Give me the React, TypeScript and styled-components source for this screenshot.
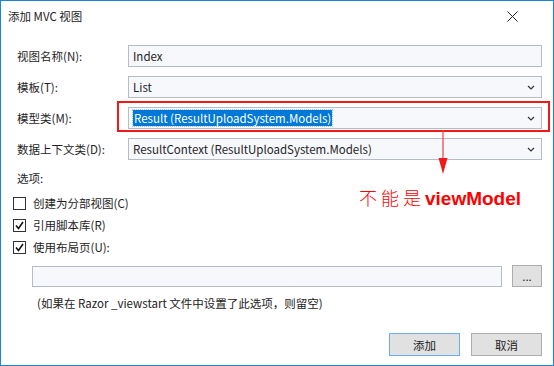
import React from "react";
import styled, { createGlobalStyle } from "styled-components";

const Global = createGlobalStyle`
  html, body { margin: 0; padding: 0; background: #fff; }
  * { box-sizing: border-box; }
  body { font-family: "Noto Sans CJK SC", "Noto Sans", sans-serif; font-size: 11.5px; line-height: 16px; color: #1e1e1e; }
`;

const Window = styled.div`
  position: relative;
  width: 554px;
  height: 366px;
  border: 1px solid #1c84d8;
  background: #fff;
  display: flex;
  flex-direction: column;
`;

const TitleBar = styled.div`
  height: 30px;
  display: flex;
  align-items: center;
  justify-content: space-between;
  padding: 0 35px 0 7px;
  color: #222;
`;

const CloseBtn = styled.div`
  width: 11px;
  height: 11px;
  display: flex;
`;

const Form = styled.div`
  position: relative;
  padding: 14px 11px 0 16px;
  display: grid;
  grid-template-columns: 111px 1fr;
  row-gap: 9px;
  align-items: center;
`;

const Label = styled.div`
  line-height: 22px;
`;

const Field = styled.div`
  position: relative;
  height: 22px;
  border: 1px solid #b6bcc6;
  background: #f6f8fc;
  display: flex;
  align-items: center;
  padding: 0 6px 0 4px;
`;

const FieldText = styled.span`
  flex: 1;
  white-space: nowrap;
`;

const Selected = styled.span`
  background: #0078d7;
  color: #fff;
  padding: 0 1px;
  line-height: 17px;
  outline: 1px dotted #9ec9f0;
`;

const RedBox = styled.div`
  position: absolute;
  left: -12px;
  right: -9px;
  top: -7px;
  bottom: -4px;
  border: 2px solid #f01818;
  pointer-events: none;
`;

const Arrow = styled.svg`
  position: absolute;
  left: 436px;
  top: 99px;
`;

const Note = styled.div`
  position: absolute;
  left: 358px;
  top: 154px;
  color: #ff0000;
  white-space: nowrap;
  line-height: 24px;
`;

const NoteLatin = styled.span`
  font-family: "Liberation Sans", Arial, sans-serif;
  font-weight: bold;
  font-size: 19px;
`;

const NoteCjk = styled.span`
  font-family: "Noto Sans CJK SC", sans-serif;
  font-weight: 300;
  font-size: 18px;
  letter-spacing: 4px;
`;

const Options = styled.div`
  display: flex;
  flex-direction: column;
  padding: 10px 11px 0 12px;
`;

const SectionLabel = styled.div`
  padding-left: 4px;
  line-height: 16px;
  margin-bottom: 6px;
`;

const CheckRow = styled.label`
  display: flex;
  align-items: center;
  height: 22px;
  gap: 7px;
`;

const Box = styled.span`
  width: 13px;
  height: 13px;
  border: 1px solid #333;
  background: #fff;
  display: flex;
  align-items: center;
  justify-content: center;
`;

const LayoutRow = styled.div`
  display: flex;
  align-items: center;
  gap: 10px;
  margin: 7px 0 0 19px;
`;

const LayoutInput = styled.div`
  flex: 1;
  height: 21px;
  border: 1px solid #b6bcc6;
  background: #f6f8fc;
`;

const Btn = styled.div<{ $default?: boolean; $w: number; $h: number }>`
  width: ${(p) => p.$w}px;
  height: ${(p) => p.$h}px;
  background: #e1e1e1;
  border: 1px solid ${(p) => (p.$default ? "#6aaef0" : "#adadad")};
  display: flex;
  align-items: center;
  justify-content: center;
  color: #222;
`;

const Hint = styled.div`
  margin: 8px 0 0 24px;
  line-height: 16px;
  color: #222;
`;

const Footer = styled.div`
  display: flex;
  justify-content: flex-end;
  gap: 11px;
  padding: 22px 11px 0 0;
`;

const Chevron = () => (
  <svg width="8" height="5" viewBox="0 0 8 5">
    <path d="M1 1 L4 4 L7 1" fill="none" stroke="#333" strokeWidth="1.2" />
  </svg>
);

const Check = () => (
  <svg width="9" height="9" viewBox="0 0 9 9">
    <path d="M1 4.5 L3.5 7.5 L8 1" fill="none" stroke="#111" strokeWidth="1.6" />
  </svg>
);

export default function App() {
  return (
    <>
      <Global />
      <Window>
        <TitleBar>
          <span>添加 MVC 视图</span>
          <CloseBtn>
            <svg width="11" height="11" viewBox="0 0 11 11">
              <path d="M0.5 0.5 L10.5 10.5 M10.5 0.5 L0.5 10.5" stroke="#222" strokeWidth="1" />
            </svg>
          </CloseBtn>
        </TitleBar>
        <Form>
          <Label>视图名称(N):</Label>
          <Field>
            <FieldText>Index</FieldText>
          </Field>
          <Label>模板(T):</Label>
          <Field>
            <FieldText>List</FieldText>
            <Chevron />
          </Field>
          <Label>模型类(M):</Label>
          <Field>
            <FieldText>
              <Selected>Result (ResultUploadSystem.Models)</Selected>
            </FieldText>
            <Chevron />
            <RedBox />
          </Field>
          <Label>数据上下文类(D):</Label>
          <Field>
            <FieldText>ResultContext (ResultUploadSystem.Models)</FieldText>
            <Chevron />
          </Field>
          <Arrow width="12" height="45" viewBox="0 0 12 45">
            <line x1="6" y1="0" x2="6" y2="32" stroke="#f04040" strokeWidth="1.2" />
            <path d="M1.5 28 L10.5 28 L6 44 Z" fill="#f01818" />
          </Arrow>
          <Note>
            <NoteCjk>不能是</NoteCjk>
            <NoteLatin>viewModel</NoteLatin>
          </Note>
        </Form>
        <Options>
          <SectionLabel>选项:</SectionLabel>
          <CheckRow>
            <Box />
            创建为分部视图(C)
          </CheckRow>
          <CheckRow>
            <Box>
              <Check />
            </Box>
            引用脚本库(R)
          </CheckRow>
          <CheckRow>
            <Box>
              <Check />
            </Box>
            使用布局页(U):
          </CheckRow>
          <LayoutRow>
            <LayoutInput />
            <Btn $w={30} $h={22}>...</Btn>
          </LayoutRow>
          <Hint>(如果在 Razor _viewstart 文件中设置了此选项，则留空)</Hint>
        </Options>
        <Footer>
          <Btn $default $w={71} $h={23}>添加</Btn>
          <Btn $w={71} $h={23}>取消</Btn>
        </Footer>
      </Window>
    </>
  );
}
